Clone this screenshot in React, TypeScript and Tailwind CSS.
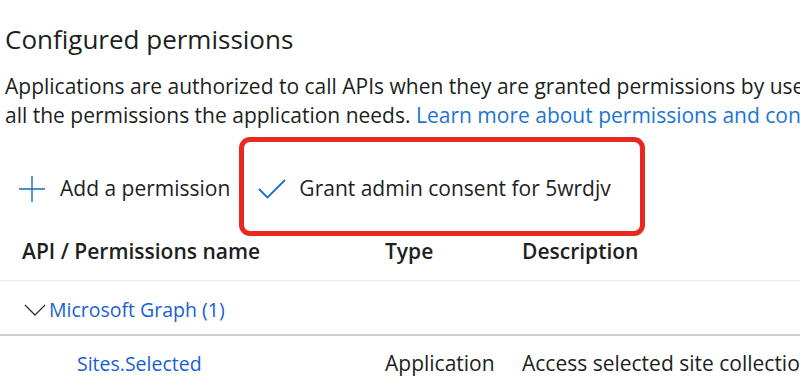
const font = { fontFamily: '"Open Sans", "Noto Sans", sans-serif' };

function PlusIcon() {
  return (
    <svg width="26" height="26" viewBox="0 0 26 26" className="text-[#0f6cbd]">
      <path d="M13 0v26M0 13h26" stroke="currentColor" strokeWidth="1.4" fill="none" />
    </svg>
  );
}

function CheckIcon() {
  return (
    <svg width="28" height="20" viewBox="0 0 28 20" className="text-[#1b6fd0]">
      <path d="M1 10l8.5 8.5L27 1" stroke="currentColor" strokeWidth="1.8" fill="none" />
    </svg>
  );
}

function Chevron() {
  return (
    <svg width="22" height="12" viewBox="0 0 22 12" className="text-[#323130]">
      <path d="M1 1l10 10L21 1" stroke="currentColor" strokeWidth="1.3" fill="none" />
    </svg>
  );
}

function Toolbar() {
  return (
    <div className="relative flex h-[68px] items-center">
      <button className="flex items-center gap-[15px] pl-[19px] pr-[28px] text-[21px] text-[#201f1e]">
        <PlusIcon />
        Add a permission
      </button>
      <button className="flex items-center gap-[13px] text-[21px] text-[#201f1e]">
        <CheckIcon />
        Grant admin consent for 5wrdjv
      </button>
      <div className="pointer-events-none absolute left-[239px] top-[-18px] h-[99px] w-[406px] rounded-[11px] border-[5px] border-[#e8291f]" />
    </div>
  );
}

function PermissionsTable() {
  return (
    <div className="text-[21px]">
      <div className="grid h-[58px] grid-cols-[363px_137px_1fr] items-center border-b border-[#edebe9] pl-[22px] font-semibold text-[#201f1e]">
        <span>API / Permissions name</span>
        <span>Type</span>
        <span>Description</span>
      </div>
      <div className="flex h-[55px] items-center gap-[3px] border-b-2 border-[#d2d0ce] pt-[4px] pl-[24px]">
        <Chevron />
        <a className="text-[19.5px] text-[#1a5fd2]">Microsoft Graph (1)</a>
      </div>
      <div className="grid h-[56px] grid-cols-[308px_137px_1fr] items-center whitespace-nowrap pl-[77px] text-[#201f1e]">
        <a className="text-[19.5px] text-[#1a5fd2]">Sites.Selected</a>
        <span>Application</span>
        <span>Access selected site collections</span>
      </div>
    </div>
  );
}

export default function App() {
  return (
    <div className="h-[385px] w-[800px] overflow-hidden bg-white" style={font}>
      <div className="w-[1100px] pl-[5px] pt-[22px]">
        <h2 className="text-[26px] leading-[34px] text-[#201f1e]">Configured permissions</h2>
        <p className="mt-[16px] whitespace-nowrap text-[21px] leading-[29px] text-[#201f1e]">
          Applications are authorized to call APIs when they are granted permissions by users/admins as part of the consent process.
          <br />
          all the permissions the application needs.{" "}
          <a className="text-[#1d74d4]">Learn more about permissions and consent</a>
        </p>
      </div>
      <div className="mt-[25px] w-[1100px]">
        <Toolbar />
        <PermissionsTable />
      </div>
    </div>
  );
}
